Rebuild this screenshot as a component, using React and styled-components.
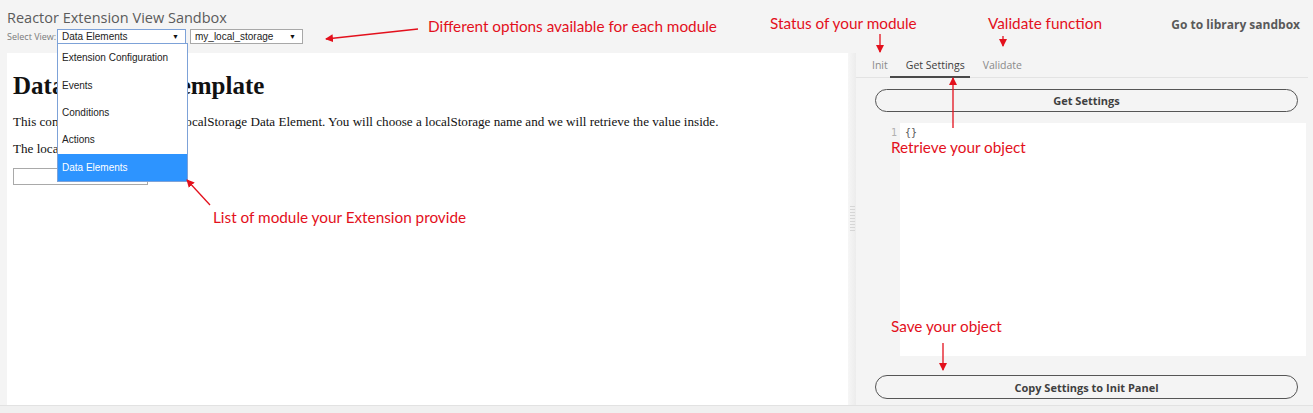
import React from 'react';
import styled, { createGlobalStyle } from 'styled-components';

const Global = createGlobalStyle`
  html, body { margin: 0; padding: 0; background: #f4f4f4; }
  body { width: 1313px; height: 413px; overflow: hidden; }
`;

const RED = '#e3101c';

const Page = styled.div`
  position: relative;
  width: 1313px;
  height: 413px;
  display: flex;
  flex-direction: column;
  font-family: "Open Sans", sans-serif;
  background: #f4f4f4;
`;

const Header = styled.header`
  height: 53px;
  box-sizing: border-box;
  padding: 8px 13px 0 7px;
  display: flex;
  justify-content: space-between;
  align-items: flex-start;
`;

const TitleBlock = styled.div`
  display: flex;
  flex-direction: column;
`;

const Title = styled.h1`
  margin: 0;
  font-weight: 400;
  font-size: 14.5px;
  line-height: 19px;
  color: #5b5b5b;
`;

const ViewRow = styled.div`
  display: flex;
  align-items: center;
  gap: 3px;
  margin-top: 2px;
`;

const Label = styled.span`
  font-size: 9px;
  color: #7a7a7a;
  width: 47px;
  white-space: nowrap;
`;

const Select = styled.div`
  position: relative;
  box-sizing: border-box;
  width: ${p => p.$w}px;
  height: 15px;
  border: 1px solid ${p => (p.$focus ? '#7da2d8' : '#a8a8a8')};
  background: #fff;
  font-family: "Liberation Sans", Arial, sans-serif;
  font-size: 10px;
  color: #222;
  padding: 0 6px 0 4px;
  display: flex;
  align-items: center;
  justify-content: space-between;
  margin-left: ${p => p.$ml || 0}px;
`;

const Caret = styled.span`
  font-size: 7px;
  color: #111;
`;

const OptionList = styled.ul`
  position: absolute;
  left: -1px;
  top: 13px;
  width: 129px;
  margin: 0;
  padding: 0;
  list-style: none;
  background: #fff;
  border: 1px solid #7da2d8;
  z-index: 5;
`;

const Option = styled.li`
  height: 27.4px;
  display: flex;
  align-items: center;
  padding-left: 4px;
  font-size: 10px;
  color: ${p => (p.$active ? '#fff' : '#222')};
  background: ${p => (p.$active ? '#2d94ff' : '#fff')};
`;

const LibLink = styled.a`
  font-size: 12px;
  font-weight: 700;
  color: #595959;
  text-decoration: none;
  margin-top: 8px;
`;

const Main = styled.div`
  flex: 1;
  display: flex;
  min-height: 0;
`;

const LeftPanel = styled.section`
  margin-left: 7px;
  width: 841px;
  background: #fff;
  box-sizing: border-box;
  padding: 0 6px;
  font-family: "Liberation Serif", "Times New Roman", serif;
  color: #111;
`;

const Heading = styled.h2`
  margin: 18px 0 13px;
  font-size: 25px;
  line-height: 30px;
  font-weight: 700;
`;

const Para = styled.p`
  margin: 0 0 12px;
  font-size: 13.1px;
  line-height: 15px;
`;

const TextInput = styled.div`
  width: 135px;
  height: 17px;
  box-sizing: border-box;
  border: 1px solid #a9a9a9;
  margin-top: 4px;
`;

const Splitter = styled.div`
  width: 8px;
  background: linear-gradient(to right, #f6f6f6, #ececec);
  display: flex;
  align-items: center;
  justify-content: center;
`;

const Grip = styled.div`
  width: 5px;
  height: 26px;
  margin-top: -20px;
  background: repeating-linear-gradient(to bottom, #d6d6d6 0 1px, transparent 1px 3px);
`;

const RightPanel = styled.section`
  flex: 1;
  display: flex;
  flex-direction: column;
  padding-right: 5px;
`;

const Tabs = styled.nav`
  height: 24px;
  display: flex;
  align-items: stretch;
  padding-left: 16px;
  border-bottom: 1px solid #e3e3e3;
`;

const Tab = styled.div`
  display: flex;
  align-items: center;
  padding: 0 ${p => p.$pr || 0}px 0 ${p => p.$pl || 0}px;
  margin-left: ${p => p.$ml || 0}px;
  font-size: 10.5px;
  color: ${p => (p.$active ? '#3d3d3d' : '#8a8a8a')};
  border-bottom: 2px solid ${p => (p.$active ? '#4a4a4a' : 'transparent')};
  margin-bottom: -1px;
`;

const PillButton = styled.button`
  box-sizing: border-box;
  height: ${p => p.$h}px;
  margin: ${p => p.$mt}px 10px 0 19px;
  border: 1.5px solid #555;
  border-radius: 12px;
  background: transparent;
  font-family: "Open Sans", sans-serif;
  font-weight: 700;
  font-size: 11px;
  color: #404040;
  padding: 0;
`;

const Editor = styled.div`
  margin: 11px 2px 0 19px;
  height: 233px;
  display: flex;
  font-family: "DejaVu Sans Mono", monospace;
  font-size: 10px;
`;

const Gutter = styled.div`
  width: 25px;
  box-sizing: border-box;
  text-align: right;
  padding: 4px 3px 0 0;
  color: #b0b0b0;
`;

const Code = styled.div`
  flex: 1;
  background: #fff;
  padding: 4px 5px 0;
  color: #555;
`;

const Footer = styled.footer`
  height: 7px;
  border-top: 1px solid #e2e2e2;
  background: #f0f0f0;
`;

const Overlay = styled.div`
  position: absolute;
  inset: 0;
  pointer-events: none;
  z-index: 10;
`;

const Note = styled.span`
  position: absolute;
  left: ${p => p.$x}px;
  top: ${p => p.$y}px;
  font-family: Lato, sans-serif;
  font-size: 15.3px;
  line-height: 20px;
  color: ${RED};
  white-space: nowrap;
`;

const Arrows = styled.svg`
  position: absolute;
  left: 0;
  top: 0;
`;

const arrows = [
  [418, 29, 326, 39],
  [210, 205, 187, 180],
  [880, 34, 880, 52],
  [1003, 36, 1003, 46],
  [953, 128, 953, 78],
  [943, 343, 943, 370],
];

export default function App() {
  const options = ['Extension Configuration', 'Events', 'Conditions', 'Actions', 'Data Elements'];
  return (
    <Page>
      <Global />
      <Header>
        <TitleBlock>
          <Title>Reactor Extension View Sandbox</Title>
          <ViewRow>
            <Label>Select View:</Label>
            <Select $w={129} $focus>
              <span>Data Elements</span>
              <Caret>▼</Caret>
              <OptionList>
                {options.map(o => (
                  <Option key={o} $active={o === 'Data Elements'}>{o}</Option>
                ))}
              </OptionList>
            </Select>
            <Select $w={113} $ml={1}>
              <span>my_local_storage</span>
              <Caret>▼</Caret>
            </Select>
          </ViewRow>
        </TitleBlock>
        <LibLink href="#">Go to library sandbox</LibLink>
      </Header>
      <Main>
        <LeftPanel>
          <Heading>Data Element Template</Heading>
          <Para>This configuration view is for a localStorage Data Element. You will choose a localStorage name and we will retrieve the value inside.</Para>
          <Para>The localStorage name:</Para>
          <TextInput />
        </LeftPanel>
        <Splitter><Grip /></Splitter>
        <RightPanel>
          <Tabs>
            <Tab>Init</Tab>
            <Tab $active $ml={2} $pl={16} $pr={5}>Get Settings</Tab>
            <Tab $pl={13}>Validate</Tab>
          </Tabs>
          <PillButton $h={23} $mt={11}>Get Settings</PillButton>
          <Editor>
            <Gutter>1</Gutter>
            <Code>{'{}'}</Code>
          </Editor>
          <PillButton $h={24} $mt={19}>Copy Settings to Init Panel</PillButton>
        </RightPanel>
      </Main>
      <Footer />
      <Overlay>
        <Note $x={428} $y={16}>Different options available for each module</Note>
        <Note $x={213} $y={207}>List of module your Extension provide</Note>
        <Note $x={770} $y={13}>Status of your module</Note>
        <Note $x={988} $y={13}>Validate function</Note>
        <Note $x={891} $y={137}>Retrieve your object</Note>
        <Note $x={891} $y={316}>Save your object</Note>
        <Arrows width="1313" height="413">
          <defs>
            <marker id="head" markerWidth="8" markerHeight="8" refX="7" refY="4" orient="auto" markerUnits="userSpaceOnUse">
              <path d="M0,0 L8,4 L0,8 z" fill={RED} />
            </marker>
          </defs>
          {arrows.map(([x1, y1, x2, y2], i) => (
            <line key={i} x1={x1} y1={y1} x2={x2} y2={y2} stroke={RED} strokeWidth="1.3" markerEnd="url(#head)" />
          ))}
        </Arrows>
      </Overlay>
    </Page>
  );
}
